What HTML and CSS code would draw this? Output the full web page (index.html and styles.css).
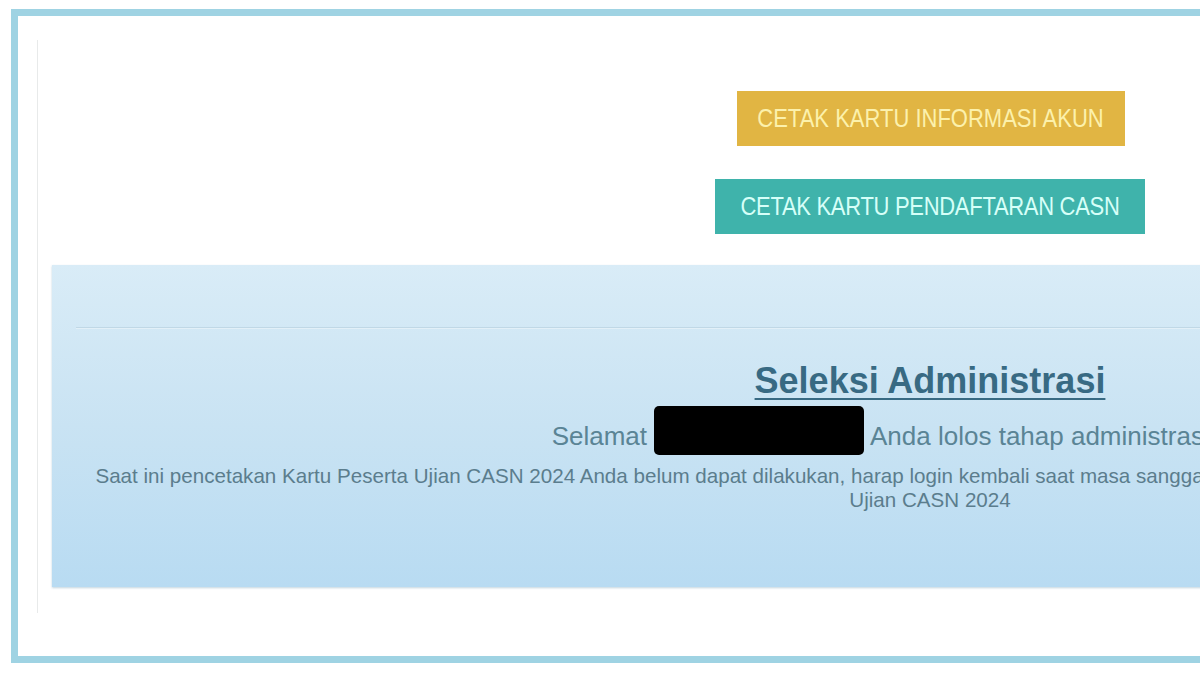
FILE: index.html
```html
<!DOCTYPE html>
<html lang="id">
<head>
<meta charset="utf-8">
<title>Seleksi Administrasi</title>
<link rel="stylesheet" href="styles.css">
</head>
<body>
<div class="frame">
  <div class="panel">
    <div class="content">
      <div class="actions">
        <a class="btn btn-yellow" href="#"><span class="btn-label">CETAK KARTU INFORMASI AKUN</span></a>
        <a class="btn btn-teal" href="#"><span class="btn-label">CETAK KARTU PENDAFTARAN CASN</span></a>
      </div>
      <div class="notice">
        <div class="rule"></div>
        <h2 class="title"><a href="#">Seleksi Administrasi</a></h2>
        <p class="greet">Selamat <span class="redact"></span> Anda lolos tahap administrasi CASN.</p>
        <p class="info">Saat ini pencetakan Kartu Peserta Ujian CASN 2024 Anda belum dapat dilakukan, harap login kembali saat masa sanggah telah berakhir atau sesuai jadwal pencetakan Kartu Peserta<br>Ujian CASN 2024</p>
      </div>
    </div>
  </div>
</div>
</body>
</html>
```

FILE: styles.css
```css
html, body {
  margin: 0;
  padding: 0;
  background: #ffffff;
  overflow: hidden;
  width: 1200px;
  height: 673px;
}

body {
  font-family: "Liberation Sans", Arial, sans-serif;
}

.frame {
  box-sizing: border-box;
  margin: 9px 0 0 11px;
  width: 1900px;
  height: 654px;
  border: 7px solid #9fd3e3;
  border-right: none;
  padding: 24px 0 0 19px;
}

.panel {
  height: 573px;
  border-left: 1px solid #e8eaea;
  padding-left: 14px;
}

.content {
  width: 1756px;
}

.actions {
  display: flex;
  flex-direction: column;
  align-items: center;
  gap: 33px;
  padding-top: 51px;
}

.btn {
  display: flex;
  align-items: center;
  justify-content: center;
  height: 55px;
  font-size: 22px;
  text-decoration: none;
  white-space: nowrap;
}

.btn-label {
  display: inline-block;
  transform: scaleY(1.2);
}

.btn-yellow {
  width: 388px;
  background: #e1b543;
  color: #fcf1ac;
  margin-left: 1px;
}

.btn-teal {
  width: 430px;
  background: #3fb3ab;
  color: #d6fff8;
  letter-spacing: -0.3px;
}

.notice {
  margin-top: 31px;
  height: 322px;
  box-sizing: border-box;
  padding: 62px 0 0 24px;
  background: linear-gradient(to bottom, #d9ecf7 0%, #c9e3f3 50%, #b8dbf2 100%);
  box-shadow: 0 1px 2px rgba(120, 160, 185, 0.45);
  text-align: center;
}

.rule {
  height: 1px;
  background: #c0d8e6;
  border-bottom: 1px solid #e2f0f8;
}

.title {
  margin: 31px 0 0 -24px;
  font-size: 36px;
  font-weight: bold;
  line-height: 42px;
}

.title a {
  color: #386a83;
  text-decoration: underline;
  text-underline-offset: 5px;
  text-decoration-thickness: 2px;
}

.greet {
  margin: 4px 0 0 -24px;
  padding-right: 12px;
  font-size: 26px;
  line-height: 30px;
  color: #5a8495;
  white-space: nowrap;
}

.redact {
  display: inline-block;
  width: 210px;
  height: 49px;
  background: #000;
  border-radius: 5px;
  vertical-align: -10px;
}

.info {
  margin: 9px 0 0 -24px;
  font-size: 20.6px;
  line-height: 24px;
  color: #5b7d8d;
  white-space: nowrap;
}
```
